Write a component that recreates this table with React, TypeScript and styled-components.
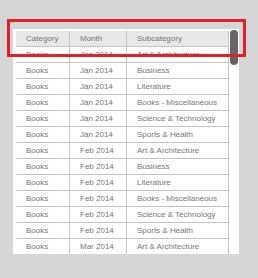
import React from 'react';
import styled, { createGlobalStyle } from 'styled-components';

const GlobalStyle = createGlobalStyle`
  html, body {
    margin: 0;
    padding: 0;
    background: #d6d6d6;
  }
  body {
    font-family: 'Liberation Sans', Arial, sans-serif;
  }
`;

const subcategories = [
  'Art & Architecture',
  'Business',
  'Literature',
  'Books - Miscellaneous',
  'Science & Technology',
  'Sports & Health',
];

const rows = [
  ...subcategories.map((sub) => ({ category: 'Books', month: 'Jan 2014', sub })),
  ...subcategories.map((sub) => ({ category: 'Books', month: 'Feb 2014', sub })),
  { category: 'Books', month: 'Mar 2014', sub: 'Art & Architecture' },
];

const App = () => {
  return (
    <Page>
      <GlobalStyle />
      <Panel>
        <Grid>
          <Row header>
            <Cell>Category</Cell>
            <Cell>Month</Cell>
            <Cell>Subcategory</Cell>
          </Row>
          {rows.map((r, i) => (
            <Row key={i}>
              <Cell>{r.category}</Cell>
              <Cell>{r.month}</Cell>
              <Cell>{r.sub}</Cell>
            </Row>
          ))}
        </Grid>
      </Panel>
      <ScrollThumb />
      <Highlight />
    </Page>
  );
};

export default App;

const Page = styled.div`
  position: relative;
  width: 258px;
  height: 278px;
  padding: 29px 0 0 13px;
  box-sizing: border-box;
`;

const Panel = styled.div`
  width: 226px;
  height: 225px;
  background: #fff;
  padding: 2px 0 0 3px;
  box-sizing: border-box;
  overflow: hidden;
`;

const Grid = styled.div`
  width: 213px;
`;

const Row = styled.div<{ header?: boolean }>`
  display: grid;
  grid-template-columns: 54px 57px 102px;
  background: ${(p) => (p.header ? '#e8e8e8' : '#fff')};
`;

const Cell = styled.div`
  height: 16px;
  box-sizing: border-box;
  padding-left: 10px;
  border-right: 1px solid #c4c4c4;
  border-bottom: 1px solid #c4c4c4;
  font-size: 8px;
  line-height: 15px;
  color: #767676;
  white-space: nowrap;
`;

const ScrollThumb = styled.div`
  position: absolute;
  left: 230px;
  top: 30px;
  width: 8px;
  height: 35px;
  border-radius: 4px;
  background: #666;
`;

const Highlight = styled.div`
  position: absolute;
  left: 7px;
  top: 19px;
  width: 239px;
  height: 38px;
  box-sizing: border-box;
  border: 3px solid #e3202a;
  pointer-events: none;
`;
